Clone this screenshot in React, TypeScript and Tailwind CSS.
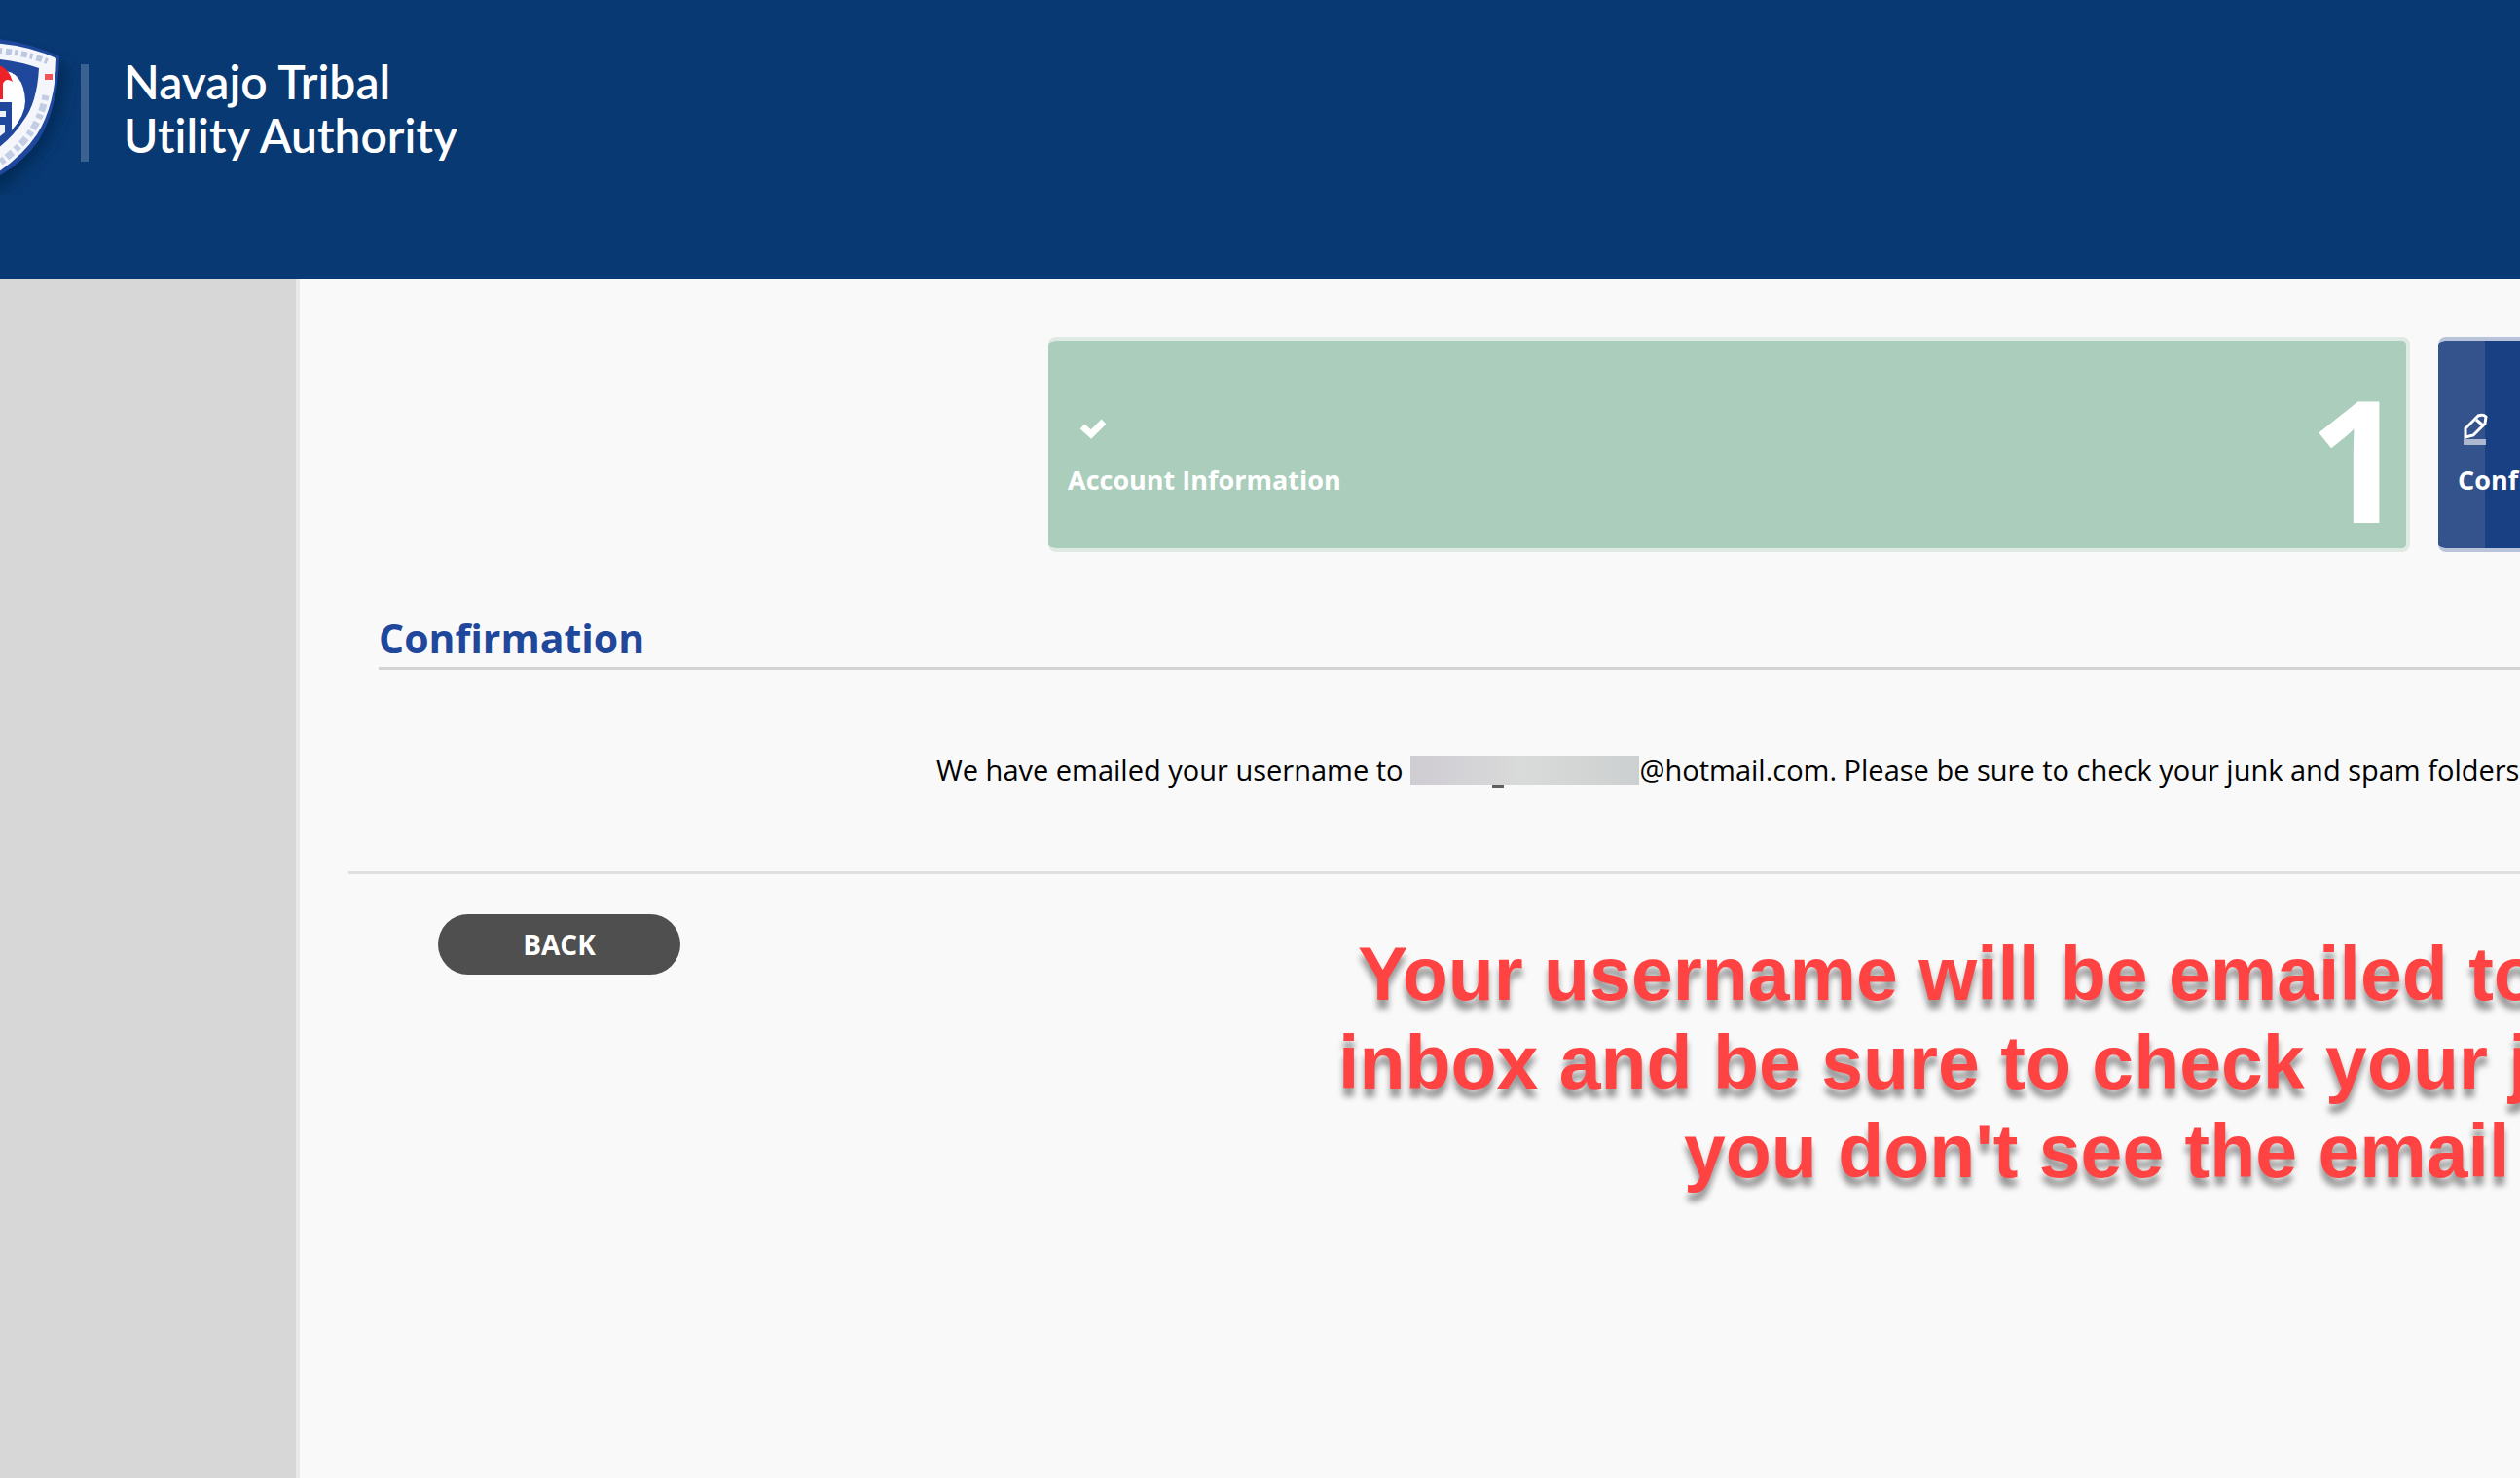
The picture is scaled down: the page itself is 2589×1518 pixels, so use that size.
import type { ReactNode } from 'react';

interface StepCardProps {
  title: string;
  icon: ReactNode;
  className: string;
  step?: number;
}

function StepCard({ title, icon, className, step }: StepCardProps) {
  return (
    <li className={`flex h-[221px] shrink-0 items-center justify-between overflow-hidden rounded-lg border-y-4 text-white ${className}`}>
      <div className="flex flex-col gap-3 pt-5 pl-5">
        <span className="flex h-10 items-center">{icon}</span>
        <span className="text-[27px] leading-10 font-bold whitespace-nowrap">{title}</span>
      </div>
      {step && <span className="pt-[26px] text-[175px] leading-none font-bold">{step}</span>}
    </li>
  );
}

function CheckIcon() {
  return (
    <svg className="ml-3 h-6 w-7" viewBox="0 0 28 24" fill="none" stroke="currentColor" strokeWidth="7" aria-hidden="true">
      <path d="M3 9l9 8L25 4" />
    </svg>
  );
}

function PencilIcon() {
  return (
    <svg className="ml-1 h-9 w-7" viewBox="0 0 28 36" fill="none" stroke="currentColor" strokeWidth="3" aria-hidden="true">
      <path d="M4 26V17L17 4Q22 2 25 5L24 12 12 24z" />
      <path d="M15 8l7 6" strokeWidth="3" />
      <path d="M2 31h23" strokeWidth="6" opacity=".6" />
    </svg>
  );
}

function Shield() {
  return (
    <svg className="h-[200px] w-[83px] shrink-0" viewBox="0 0 83 200" aria-hidden="true">
      <defs>
        <filter id="shade" x="-30%" y="-20%" width="180%" height="160%">
          <feGaussianBlur stdDeviation="8" />
        </filter>
      </defs>
      <path d="M-10 50L70 68Q66 120 46 150Q24 180-10 204z" fill="#062b58" filter="url(#shade)" />
      <path d="M-10 39Q30 43 61 58Q60 110 40 144Q24 168-10 186z" fill="#1f479b" />
      <path d="M-10 44Q28 46 58 60Q57 108 38 138Q22 162-10 182z" fill="#f4f6fb" />
      <path d="M-10 51Q28 54 51 64" fill="none" stroke="#bcc8e1" strokeWidth="6" strokeDasharray="6 3 3 4" />
      <path d="M47 98Q43 120 30 138Q18 154-4 170" fill="none" stroke="#c3cde4" strokeWidth="7" strokeDasharray="5 4 8 3" />
      <path d="M-10 60Q18 62 40 70Q38 106 24 124Q12 143-10 158z" fill="#1f479b" />
      <path d="M-10 74Q24 66 26 104Q26 118 12 134L-10 144z" fill="#fff" />
      <path d="M-10 65Q8 66 13 84Q6 79 3 86V102H-10z" fill="#ed2228" />
      <path d="M0 105H12V134L0 146z" fill="#1f479b" />
      <path d="M0 114H6V120H0zM0 128H5V136L0 140z" fill="#eef1f8" />
      <path d="M46 76h8v6h-8z" fill="#f0555a" />
    </svg>
  );
}

export default function App() {
  return (
    <div className="flex min-h-screen flex-col overflow-hidden bg-[#f9f9f9] font-['Open_Sans',sans-serif] text-black">
      <header className="flex h-[287px] items-start bg-[#083973] text-white">
        <Shield />
        <div className="mt-[66px] h-[100px] w-2 bg-[#3b6190]" />
        <p className="mt-14 ml-9 font-['Lato',sans-serif] text-[48px] leading-[55px] font-semibold [font-variant-ligatures:none]">
          Navajo Tribal
          <br />
          Utility Authority
        </p>
      </header>

      <div className="flex flex-1">
        <aside className="w-[308px] shrink-0 border-r-4 border-[#e9e9e9] bg-[#d7d7d7]" />

        <main className="min-w-0 flex-1 overflow-hidden pt-[59px] pl-[50px]">
          <ol className="ml-[719px] flex gap-[29px]">
            <StepCard
              title="Account Information"
              icon={<CheckIcon />}
              step={1}
              className="w-[1399px] border-r-4 border-[#dfeae5] bg-[#abcdbc] bg-clip-padding"
            />
            <StepCard
              title="Confirmation"
              icon={<PencilIcon />}
              className="w-[1399px] border-[#b9c3da] bg-linear-to-r from-[#34528c] from-[48px] to-[#1a4084] to-[48px] bg-clip-padding"
            />
          </ol>

          <section className="ml-[31px]">
            <h1 className="mt-[58px] border-b-3 border-[#d3d3d3] text-[41px] leading-[60px] font-bold text-[#1f479b]">
              Confirmation
            </h1>
            <p className="mt-[76px] mb-[77px] ml-[573px] flex items-center text-[29px] leading-[54px] whitespace-nowrap">
              We have emailed your username to
              {/* redacted mailbox name */}
              <span className="relative ml-2 h-[30px] w-[235px] shrink-0 bg-linear-to-r from-[#cfccd2] via-[#d9dada] to-[#cdd0d0]">
                <span className="absolute top-full left-[84px] h-[3px] w-3 bg-[#5c6060]" />
              </span>
              @hotmail.com. Please be sure to check your junk and spam folders
            </p>
          </section>

          <section className="flex items-start border-t-3 border-[#dfdfdf] pt-[41px]">
            <button
              type="button"
              className="ml-[92px] h-[62px] w-[249px] shrink-0 rounded-full bg-[#4f4f4f] text-[28px] font-bold text-white"
            >
              BACK
            </button>
            <p className="mt-4 ml-[676px] text-[77px] leading-[91px] font-bold whitespace-nowrap text-[#ff4242] font-['Liberation_Sans',sans-serif] text-shadow-[0_9px_6px_rgb(0_0_0/0.4)]">
              <span className="block pl-5">Your username will be emailed to</span>
              <span className="block">inbox and be sure to check your junk</span>
              <span className="block pl-[355px]">you don't see the email</span>
            </p>
          </section>
        </main>
      </div>
    </div>
  );
}
